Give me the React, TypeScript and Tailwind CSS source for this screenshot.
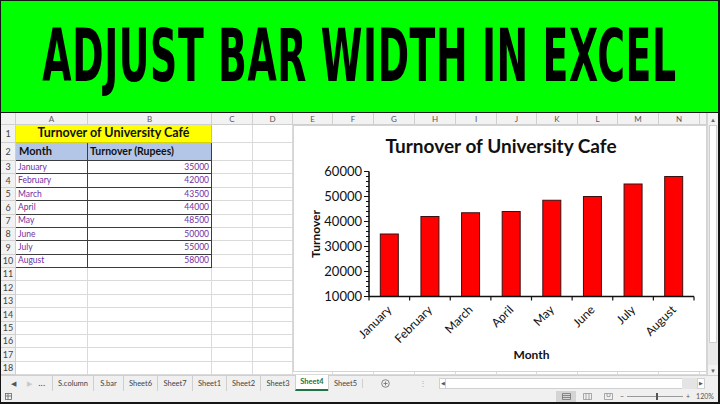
import React from 'react';

const data = [
  { month: 'January', value: 35000 },
  { month: 'February', value: 42000 },
  { month: 'March', value: 43500 },
  { month: 'April', value: 44000 },
  { month: 'May', value: 48500 },
  { month: 'June', value: 50000 },
  { month: 'July', value: 55000 },
  { month: 'August', value: 58000 },
];

const letters = ['A', 'B', 'C', 'D', 'E', 'F', 'G', 'H', 'I', 'J', 'K', 'L', 'M', 'N', ''];

const tabs = [
  { name: 'S.column', w: 'w-[41px]' },
  { name: 'S.bar', w: 'w-[30px]' },
  { name: 'Sheet6', w: 'w-[34px]' },
  { name: 'Sheet7', w: 'w-[35px]' },
  { name: 'Sheet1', w: 'w-[34px]' },
  { name: 'Sheet2', w: 'w-[34px]' },
  { name: 'Sheet3', w: 'w-[35px]' },
  { name: 'Sheet4', w: 'w-[33px]', active: true },
  { name: 'Sheet5', w: 'w-[34px]' },
];

const gridLine = 'border-r border-b border-[#dadada]';
const tableLine = 'border-r border-b border-[#3c3c3c]';

function RowHead({ n }: { n: number }) {
  return (
    <div className="bg-[#f2f2f2] border-r border-b border-[#cfcfcf] text-[9px] text-[#444] flex items-center justify-center">
      {n}
    </div>
  );
}

function Empties({ count, row }: { count: number; row: number }) {
  return (
    <>
      {Array.from({ length: count }).map((_, i) => (
        <div key={`${row}-${i}`} className={gridLine} />
      ))}
    </>
  );
}

function Chart() {
  const x0 = 75;
  const x1 = 400;
  const y0 = 170.5;
  const cw = (x1 - x0) / 8;
  const y = (v: number) => y0 - (v - 10000) * 0.0025;
  const minor = [];
  for (let v = 10000; v <= 60000; v += 2000) minor.push(v);

  return (
    <svg width="413" height="247" viewBox="0 0 413 247">
      <text x="207" y="27" textAnchor="middle" fontSize="19" fontWeight="700" fill="#111">
        Turnover of University Cafe
      </text>

      {data.map((d, i) => {
        const cx = x0 + cw * (i + 0.5);
        return (
          <rect
            key={d.month}
            x={cx - 9}
            y={y(d.value)}
            width="18"
            height={y0 - y(d.value)}
            fill="#ff0000"
            stroke="#3a1010"
            strokeWidth="1"
          />
        );
      })}

      {minor.map((v) => (
        <line
          key={v}
          x1={v % 10000 === 0 ? x0 - 5 : x0 - 3}
          x2={x0}
          y1={y(v)}
          y2={y(v)}
          stroke="#111"
          strokeWidth="1"
        />
      ))}
      <line x1={x0} x2={x0} y1={y(60000)} y2={y0} stroke="#111" strokeWidth="1.6" />
      <line x1={x0} x2={x1} y1={y0} y2={y0} stroke="#111" strokeWidth="1.6" />
      {Array.from({ length: 9 }).map((_, i) => (
        <line key={i} x1={x0 + cw * i} x2={x0 + cw * i} y1={y0} y2={y0 + 4} stroke="#111" strokeWidth="1.2" />
      ))}

      {[10000, 20000, 30000, 40000, 50000, 60000].map((v) => (
        <text key={v} x={x0 - 7} y={y(v) + 4.5} textAnchor="end" fontSize="13" fill="#111">
          {v}
        </text>
      ))}

      {data.map((d, i) => {
        const cx = x0 + cw * (i + 0.5);
        return (
          <text
            key={d.month}
            transform={`translate(${cx + 3} ${y0 + 14}) rotate(-45)`}
            textAnchor="end"
            fontSize="12"
            fill="#111"
          >
            {d.month}
          </text>
        );
      })}

      <text transform={`translate(26 ${(y(60000) + y0) / 2}) rotate(-90)`} textAnchor="middle" fontSize="12" fontWeight="700" fill="#111">
        Turnover
      </text>
      <text x={(x0 + x1) / 2} y="233" textAnchor="middle" fontSize="12" fontWeight="700" fill="#111">
        Month
      </text>
    </svg>
  );
}

export default function App() {
  return (
    <div className="w-[720px] h-[404px] flex flex-col overflow-hidden bg-white border-t border-l border-r-2 border-b-2 border-[#151515] font-[family-name:Lato,sans-serif]">
      {/* title banner */}
      <div className="h-[112px] shrink-0 bg-[#00ff00] border-b border-[#151515] flex items-center justify-center">
        <h1 className="font-[family-name:'DejaVu_Sans_Condensed',sans-serif] font-bold text-[42px] leading-none text-black scale-y-[1.72] tracking-[0.6px]">
          ADJUST BAR WIDTH IN EXCEL
        </h1>
      </div>

      {/* sheet */}
      <div className="h-[262px] shrink-0 flex">
        <div className="relative flex-1 grid grid-cols-[15px_72px_124px_41px_40px_40px_41px_41px_41px_41px_40px_41px_40px_41px_41px_1fr] grid-rows-[12px_18px_18px_repeat(16,minmax(0,1fr))]">
          <div className="bg-[#f2f2f2] border-r border-b border-[#cfcfcf]" />
          {letters.map((l, i) => (
            <div
              key={i}
              className="bg-[#f2f2f2] border-r border-b border-[#cfcfcf] text-[8px] text-[#555] flex items-center justify-center"
            >
              {l}
            </div>
          ))}

          {/* row 1 */}
          <RowHead n={1} />
          <div className="col-span-2 bg-[#ffff00] border-r border-b border-[#d4d400] text-[12.5px] font-bold text-[#111] flex items-center justify-center">
            Turnover of University Café
          </div>
          <Empties count={13} row={1} />

          {/* row 2 */}
          <RowHead n={2} />
          <div className={`${tableLine} bg-[#b4c6e7] text-[11px] font-bold text-[#111] flex items-center pl-[3px]`}>Month</div>
          <div className={`${tableLine} bg-[#b4c6e7] text-[10.5px] font-bold text-[#111] flex items-center pl-[2px]`}>
            Turnover (Rupees)
          </div>
          <Empties count={13} row={2} />

          {data.map((d, i) => (
            <React.Fragment key={d.month}>
              <RowHead n={i + 3} />
              <div className={`${tableLine} text-[8.5px] text-[#7030a0] flex items-center pl-[2px]`}>{d.month}</div>
              <div className={`${tableLine} text-[8.5px] text-[#7030a0] flex items-center justify-end pr-[2px]`}>{d.value}</div>
              <Empties count={13} row={i + 3} />
            </React.Fragment>
          ))}

          {Array.from({ length: 8 }).map((_, i) => (
            <React.Fragment key={i}>
              <RowHead n={i + 11} />
              <Empties count={15} row={i + 11} />
            </React.Fragment>
          ))}

          {/* floating chart */}
          <div className="absolute left-[292px] top-[12px] w-[414px] h-[247px] bg-white border border-[#d4d4d4]">
            <Chart />
          </div>
        </div>

        {/* vertical scrollbar */}
        <div className="w-[11px] flex flex-col bg-[#e9e9e9] border-l border-[#d6d6d6]">
          <div className="h-[12px] flex items-center justify-center text-[6px] text-[#666] bg-[#f2f2f2]">▲</div>
          <div className="h-[218px] bg-white border border-[#cfcfcf] mx-[1px]" />
          <div className="flex-1" />
          <div className="h-[10px] flex items-center justify-center text-[6px] text-[#666] bg-[#f2f2f2]">▼</div>
        </div>
      </div>

      {/* sheet tabs */}
      <div className="h-[16px] shrink-0 flex items-stretch bg-[#f0f0f0] border-t border-[#cfcfcf] text-[7.5px] text-[#444]">
        <div className="w-[51px] flex items-center">
          <span className="w-[24px] text-center text-[7px] text-[#555]">◀</span>
          <span className="w-[8px] text-center text-[7px] text-[#c8c8c8]">▶</span>
          <span className="w-[18px] text-center font-bold tracking-[0.5px]">...</span>
        </div>
        {tabs.map((t) => (
          <div
            key={t.name}
            className={
              t.active
                ? `${t.w} flex items-center justify-center bg-white text-[#217346] font-bold border-b-2 border-[#217346] border-l border-l-[#cfcfcf] -mt-[1px]`
                : `${t.w} flex items-center justify-center border-l border-[#cfcfcf]`
            }
          >
            {t.name}
          </div>
        ))}
        <div className="w-[1px] my-[3px] bg-[#cfcfcf]" />
        <div className="w-[44px] flex items-center justify-center">
          <svg width="9" height="9" viewBox="0 0 9 9">
            <circle cx="4.5" cy="4.5" r="3.8" fill="none" stroke="#777" strokeWidth="0.9" />
            <path d="M4.5 2.5v4M2.5 4.5h4" stroke="#777" strokeWidth="0.9" />
          </svg>
        </div>
        <div className="w-[32px] flex items-center justify-center text-[#aaa]">⋮</div>
        <div className="w-[266px] flex items-center py-[2px]">
          <div className="w-[7px] h-full flex items-center justify-center text-[5px] text-[#555] bg-white border border-[#d0d0d0]">◀</div>
          <div className="w-[236px] h-full bg-white border-y border-[#d0d0d0]" />
          <div className="flex-1 h-full bg-[#e4e4e4]" />
          <div className="w-[8px] h-full flex items-center justify-center text-[5px] text-[#555] bg-white border border-[#d0d0d0]">▶</div>
        </div>
        <div className="flex-1" />
      </div>

      {/* status bar */}
      <div className="h-[11px] shrink-0 flex items-center bg-[#f0f0f0] text-[7px] text-[#555]">
        <div className="w-[14px] flex items-center justify-center">
          <svg width="7" height="7" viewBox="0 0 7 7">
            <rect x="0.5" y="0.5" width="6" height="6" fill="none" stroke="#666" strokeWidth="0.8" />
            <path d="M0.5 3h6M3 0.5v6" stroke="#666" strokeWidth="0.8" />
          </svg>
        </div>
        <div className="flex-1" />
        <div className="w-[20px] h-full bg-[#d4d4d4] flex items-center justify-center">
          <svg width="9" height="7" viewBox="0 0 9 7">
            <path d="M0.5 0.5h8v6h-8zM0.5 2.5h8M0.5 4.5h8" fill="none" stroke="#666" strokeWidth="0.7" />
          </svg>
        </div>
        <div className="w-[22px] flex items-center justify-center">
          <svg width="9" height="7" viewBox="0 0 9 7">
            <path d="M0.5 0.5h8v6h-8zM3 0.5v6M6 0.5v6" fill="none" stroke="#888" strokeWidth="0.7" />
          </svg>
        </div>
        <div className="w-[20px] flex items-center justify-center">
          <svg width="9" height="7" viewBox="0 0 9 7">
            <path d="M0.5 0.5h8v6h-8zM3 0.5v3h3v-3" fill="none" stroke="#888" strokeWidth="0.7" />
          </svg>
        </div>
        <span className="w-[8px] text-center">−</span>
        <div className="relative w-[56px] h-[1px] bg-[#999] mx-[1px]">
          <div className="absolute left-[29px] -top-[3px] w-[2px] h-[7px] bg-[#555]" />
        </div>
        <span className="w-[8px] text-center">+</span>
        <span className="w-[26px] text-center">120%</span>
      </div>
    </div>
  );
}
